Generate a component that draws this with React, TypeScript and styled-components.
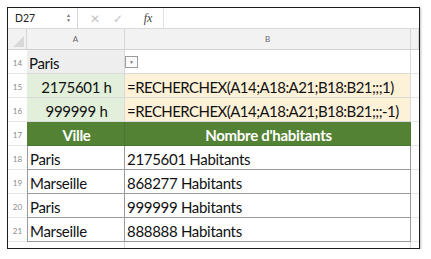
import React from "react";
import styled, { createGlobalStyle, css } from "styled-components";

const GlobalStyle = createGlobalStyle`
  html, body {
    margin: 0;
    padding: 0;
    background: #ffffff;
  }
  body {
    font-family: Lato, "Open Sans", sans-serif;
  }
`;

const Frame = styled.div`
  margin: 7px 0 0 7px;
  width: 411px;
  height: 240px;
  border: 1.5px solid #1e1e1e;
  box-shadow: 1px 1px 2px rgba(0, 0, 0, 0.25);
  overflow: hidden;
  background: #ffffff;
  display: flex;
  flex-direction: column;
`;

const FormulaBar = styled.div`
  height: 20px;
  display: flex;
  align-items: center;
  border-bottom: 1px solid #d9d9d9;
  background: #ffffff;
`;

const NameBox = styled.div`
  width: 70px;
  height: 100%;
  display: flex;
  align-items: center;
  justify-content: space-between;
  padding: 0 6px 0 7px;
  box-sizing: border-box;
  border-right: 1px solid #d6d6d6;
  font-size: 10.5px;
  color: #222;
`;

const Spinner = styled.div`
  display: flex;
  flex-direction: column;
  align-items: center;
  font-size: 5px;
  line-height: 5px;
  color: #777;
`;

const BarIcon = styled.span<{ $dim?: boolean }>`
  width: 23px;
  text-align: center;
  color: ${(p) => (p.$dim ? "#c4c4c4" : "#444")};
  font-size: 12px;
`;

const Fx = styled.span`
  width: 30px;
  text-align: center;
  font-family: "Liberation Serif", serif;
  font-style: italic;
  font-size: 12px;
  color: #444;
  border-right: 1px solid #e2e2e2;
  margin-left: 4px;
  height: 100%;
  line-height: 20px;
`;

const Grid = styled.div`
  display: grid;
  grid-template-columns: 19px 98px 286px 1fr;
  grid-auto-rows: 24px;
`;

const HeaderGrid = styled(Grid)`
  grid-auto-rows: 20px;
  background: #f2f2f2;
  border-bottom: 1px solid #d2d2d2;
`;

const Corner = styled.div`
  position: relative;
  border-right: 1px solid #d6d6d6;
  &::after {
    content: "";
    position: absolute;
    right: 2px;
    bottom: 2px;
    border-left: 11px solid transparent;
    border-bottom: 11px solid #d8d8d8;
  }
`;

const ColLabel = styled.div`
  display: flex;
  align-items: center;
  justify-content: center;
  font-size: 8px;
  color: #666;
  border-right: 1px solid #d6d6d6;
`;

const RowNum = styled.div`
  display: flex;
  align-items: center;
  justify-content: center;
  font-size: 8px;
  color: #8a8a8a;
  padding-top: 3px;
  box-sizing: border-box;
  border-bottom: 1px solid #e6e6e6;
`;

type Tone = "plain" | "gray" | "green" | "amber" | "head";

const Cell = styled.div<{ $tone?: Tone; $center?: boolean; $table?: boolean }>`
  display: flex;
  align-items: center;
  justify-content: ${(p) => (p.$center ? "center" : "flex-start")};
  padding: 2px 0 0 2px;
  box-sizing: border-box;
  font-size: 15px;
  letter-spacing: -0.3px;
  color: #111;
  white-space: nowrap;
  overflow: hidden;
  border-right: 1px solid #dadada;
  border-bottom: 1px solid #dadada;
  ${(p) => p.$tone === "gray" && css`background: #eeeeee;`}
  ${(p) => p.$tone === "green" && css`background: #e2efda;`}
  ${(p) => p.$tone === "amber" && css`background: #fdf1d8;`}
  ${(p) =>
    p.$tone === "head" &&
    css`
      background: #548235;
      color: #ffffff;
      font-weight: 700;
      border-color: #4a7530;
    `}
  ${(p) =>
    p.$table &&
    css`
      border-right: 1px solid #9a9a9a;
      border-bottom: 1px solid #9a9a9a;
    `}
`;

const Formula = styled(Cell)`
  letter-spacing: -0.55px;
`;

const TableLeft = styled(Cell)`
  border-left: 1px solid #9a9a9a;
`;

const FilterBox = styled.span`
  width: 11px;
  height: 10px;
  margin: -2px 0 0 -2px;
  border: 1px solid #9c9c9c;
  background: #fafafa;
  display: flex;
  align-items: center;
  justify-content: center;
  font-size: 5px;
  color: #777;
  letter-spacing: 0;
`;

const Spare = styled.div`
  border-bottom: 1px solid #e6e6e6;
`;

const rows = [
  { n: 18, ville: "Paris", hab: "2175601 Habitants" },
  { n: 19, ville: "Marseille", hab: "868277 Habitants" },
  { n: 20, ville: "Paris", hab: "999999 Habitants" },
  { n: 21, ville: "Marseille", hab: "888888 Habitants" },
];

export default function App() {
  return (
    <>
      <GlobalStyle />
      <Frame>
        <FormulaBar>
          <NameBox>
            <span>D27</span>
            <Spinner>
              <span>▲</span>
              <span>▼</span>
            </Spinner>
          </NameBox>
          <BarIcon $dim style={{ marginLeft: 5 }}>✕</BarIcon>
          <BarIcon $dim>✓</BarIcon>
          <Fx>fx</Fx>
        </FormulaBar>
        <HeaderGrid>
          <Corner />
          <ColLabel>A</ColLabel>
          <ColLabel>B</ColLabel>
          <ColLabel />
        </HeaderGrid>
        <Grid>
          <RowNum>14</RowNum>
          <Cell $tone="gray">Paris</Cell>
          <Cell>
            <FilterBox>▼</FilterBox>
          </Cell>
          <Spare />

          <RowNum>15</RowNum>
          <Cell $tone="green" $center>2175601 h</Cell>
          <Formula $tone="amber">=RECHERCHEX(A14;A18:A21;B18:B21;;;1)</Formula>
          <Spare />

          <RowNum>16</RowNum>
          <Cell $tone="green" $center>999999 h</Cell>
          <Formula $tone="amber">=RECHERCHEX(A14;A18:A21;B18:B21;;;-1)</Formula>
          <Spare />

          <RowNum>17</RowNum>
          <Cell $tone="head" $center>Ville</Cell>
          <Cell $tone="head" $center>Nombre d'habitants</Cell>
          <Spare />

          {rows.map((r) => (
            <React.Fragment key={r.n}>
              <RowNum>{r.n}</RowNum>
              <TableLeft $table>{r.ville}</TableLeft>
              <Cell $table>{r.hab}</Cell>
              <Spare />
            </React.Fragment>
          ))}

          <RowNum />
          <Cell />
          <Cell />
          <Spare />
        </Grid>
      </Frame>
    </>
  );
}
